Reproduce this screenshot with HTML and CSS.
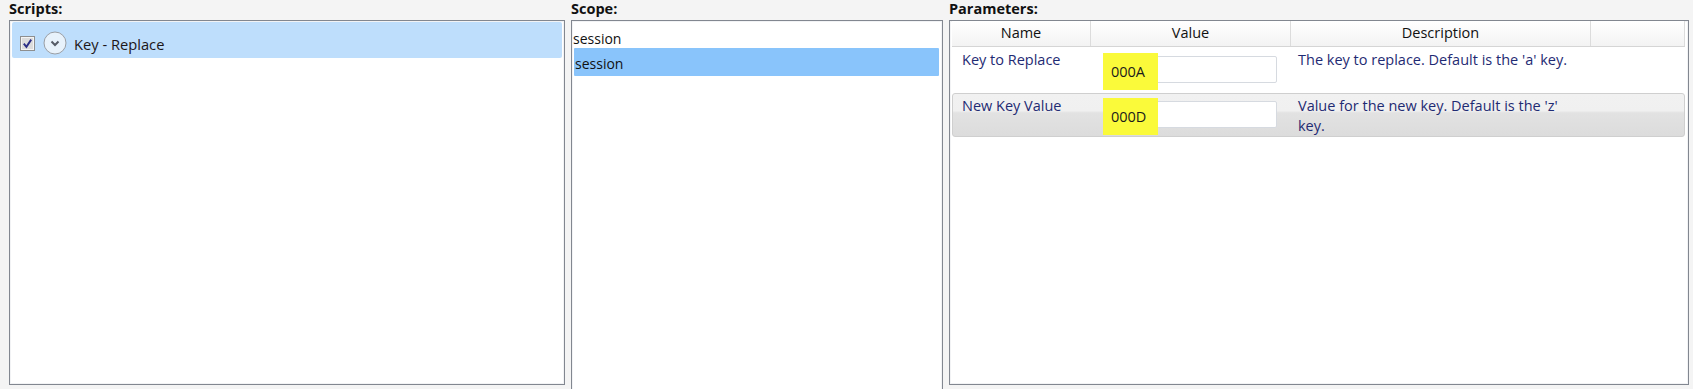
FILE: index.html
```html
<!DOCTYPE html>
<html>
<head>
<meta charset="utf-8">
<link rel="stylesheet" href="styles.css">
</head>
<body>
<div class="layout">
  <section class="col">
    <div class="label">Scripts:</div>
    <div class="panel">
      <div class="script-item">
        <span class="check">
          <svg width="15" height="15" viewBox="0 0 15 15">
            <rect x="0.5" y="0.5" width="14" height="14" fill="#f4f4f4" stroke="#8e8f8f"/>
            <rect x="2" y="2" width="11" height="11" fill="#dcdcdc"/>
            <path d="M3.8 7.6 L6.4 10.8 L11.2 3.6" fill="none" stroke="#2b2e86" stroke-width="1.9"/>
          </svg>
        </span>
        <span class="expander">
          <svg width="24" height="24" viewBox="0 0 24 24">
            <circle cx="12" cy="12" r="11" fill="#e8f2fb" stroke="#9a9ea4" stroke-width="1"/>
            <path d="M8.5 10.5 L12 14 L15.5 10.5" fill="none" stroke="#555b66" stroke-width="2"/>
          </svg>
        </span>
        <span class="script-name">Key - Replace</span>
      </div>
    </div>
  </section>
  <section class="col">
    <div class="label">Scope:</div>
    <div class="panel scope">
      <div class="scope-item">session</div>
      <div class="scope-item selected">session</div>
    </div>
  </section>
  <section class="col">
    <div class="label">Parameters:</div>
    <div class="panel params">
      <div class="grid-head">
        <div class="hcell c-name">Name</div>
        <div class="hcell c-value">Value</div>
        <div class="hcell c-desc">Description</div>
        <div class="hcell c-fill"></div>
      </div>
      <div class="prow">
        <div class="pcell c-name">Key to Replace</div>
        <div class="pcell c-value"><div class="tbox"><span class="mark"></span><span class="tval">000A</span></div></div>
        <div class="pcell c-desc">The key to replace. Default is the 'a' key.</div>
      </div>
      <div class="prow sel">
        <div class="pcell c-name">New Key Value</div>
        <div class="pcell c-value"><div class="tbox"><span class="mark"></span><span class="tval">000D</span></div></div>
        <div class="pcell c-desc">Value for the new key. Default is the 'z' key.</div>
      </div>
    </div>
  </section>
</div>
</body>
</html>
```
FILE: styles.css
```css
html, body {
  margin: 0;
  padding: 0;
  background: #f4f4f4;
  font-family: "Open Sans", "Noto Sans", sans-serif;
  font-size: 14px;
}
.layout {
  display: grid;
  grid-template-columns: 556px 372px 740px;
  column-gap: 6px;
  padding-left: 9px;
  height: 389px;
}
.col {
  display: flex;
  flex-direction: column;
}
.label {
  height: 20px;
  font-weight: bold;
  font-size: 14.5px;
  line-height: 20px;
  color: #111;
  margin-top: -1px;
}
.panel {
  height: 363px;
  margin-top: 1px;
  background: #fff;
  border: 1px solid #828790;
  box-shadow: inset 0 0 0 1px #f2f3f5;
}
.script-item {
  margin: 1px 2px 0 2px;
  height: 36px;
  box-sizing: border-box;
  padding-top: 6px;
  background: #bedefc;
  border-radius: 2px;
  display: flex;
  align-items: center;
}
.check {
  margin-left: 8px;
  display: flex;
  margin-top: 1px;
}
.expander {
  margin-left: 8px;
  display: flex;
}
.script-name {
  margin-left: 7px;
  font-size: 14.7px;
  color: #1d1618;
  margin-top: 1px;
}
.scope {
  padding-top: 6px;
}
.scope-item {
  box-sizing: border-box;
  height: 28px;
  line-height: 20px;
  font-size: 14px;
  color: #111;
  margin: 0 3px 0 1px;
}
.scope-item:first-child {
  height: 21px;
  padding-top: 2px;
}
.scope-item.selected {
  background: #89c4fb;
  padding-left: 1px;
  margin-left: 2px;
  padding-top: 6px;
  border-radius: 1px;
}
.params {
  padding: 0 2px;
}
.grid-head {
  display: flex;
  height: 25px;
  background: linear-gradient(#ffffff, #f3f3f3);
  border-bottom: 1px solid #d5d5d5;
  margin-right: 1px;
}
.hcell {
  font-size: 14.5px;
  line-height: 24px;
  text-align: center;
  color: #111;
  border-right: 1px solid #dcdcdc;
  box-sizing: border-box;
}
.c-name { width: 139px; }
.c-value { width: 200px; }
.c-desc { width: 300px; }
.c-fill { width: 94px; }
.prow {
  display: flex;
  height: 46px;
  box-sizing: border-box;
}
.prow.sel {
  height: 44px;
  background: linear-gradient(#f1f1f1 0%, #f0f0f0 40%, #e2e2e2 45%, #dcdcdc 100%);
  border: 1px solid #cfcfcf;
  border-radius: 3px;
  margin-right: 1px;
}
.pcell {
  color: #1f2b73;
  font-size: 14.5px;
  box-sizing: border-box;
}
.pcell.c-name {
  padding: 3px 0 0 10px;
  line-height: 20px;
}
.pcell.c-desc {
  padding: 3px 0 0 7px;
  width: 285px;
  line-height: 20px;
}
.pcell.c-value {
  padding: 9px 0 0 12px;
}
.prow.sel .pcell.c-name { padding-top: 2px; padding-left: 9px; }
.prow.sel .pcell.c-desc { padding-top: 2px; padding-left: 6px; }
.prow.sel .pcell.c-value { padding-top: 7px; padding-left: 11px; }
.tbox {
  position: relative;
  width: 174px;
  height: 27px;
  box-sizing: border-box;
  background: #fff;
  border: 1px solid #d6dae0;
  border-radius: 2px;
}
.mark {
  position: absolute;
  left: -1px;
  top: -4px;
  width: 55px;
  height: 37px;
  background: #fafa3a;
}
.tval {
  position: relative;
  display: block;
  padding-left: 7px;
  line-height: 27px;
  margin-top: 1px;
  font-size: 14.5px;
  color: #1a1a1a;
}
```
